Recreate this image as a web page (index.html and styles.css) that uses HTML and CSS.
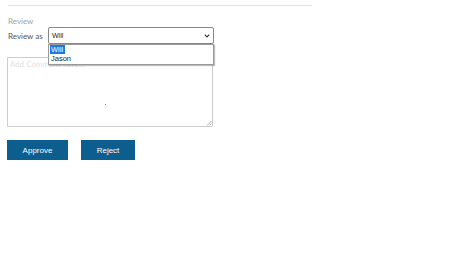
FILE: index.html
```html
<!DOCTYPE html>
<html>
<head>
<meta charset="utf-8">
<link rel="stylesheet" href="styles.css">
</head>
<body>
<div class="page">
  <hr class="rule">
  <div class="section-title">Review</div>
  <div class="review-row">
    <span class="review-label">Review as</span>
    <div class="select-wrap">
      <div class="select">
        <span>Will</span>
        <svg class="chev" width="6" height="4" viewBox="0 0 6 4"><path d="M0.8 0.7 L3 2.9 L5.2 0.7" fill="none" stroke="#333" stroke-width="1.1"/></svg>
      </div>
      <div class="options">
        <div class="opt sel">Will</div>
        <div class="opt">Jason</div>
      </div>
    </div>
  </div>
  <div class="comment">
    <span class="placeholder">Add Comment here...</span>
    <span class="dot"></span>
    <svg class="grip" width="6" height="6" viewBox="0 0 6 6"><path d="M5.5 1 L1 5.5 M5.5 3.5 L3.5 5.5" stroke="#999" stroke-width="0.8"/></svg>
  </div>
  <div class="actions">
    <button class="btn approve">Approve</button>
    <button class="btn reject">Reject</button>
  </div>
</div>
</body>
</html>
```

FILE: styles.css
```css
html, body {
  margin: 0;
  padding: 0;
  background: #fff;
}
.page {
  padding: 0 0 0 7px;
  width: 305px;
  font-family: Lato, "Liberation Sans", sans-serif;
}
.rule {
  margin: 5px 0 0 1px;
  border: 0;
  border-top: 1px solid #e4e4e4;
  height: 0;
}
.section-title {
  margin: 10px 0 0 1px;
  font-size: 8px;
  color: #a0a0a0;
  line-height: 10px;
}
.review-row {
  display: flex;
  align-items: center;
  margin-top: 1px;
  height: 17px;
}
.review-label {
  font-size: 8px;
  color: #555;
  width: 40px;
  margin-left: 1px;
}
.select-wrap {
  position: relative;
  width: 166px;
}
.select {
  height: 15px;
  border: 1px solid #888;
  border-radius: 2px;
  display: flex;
  align-items: center;
  justify-content: space-between;
  padding: 0 3px 0 3px;
  font-family: "Liberation Sans", Arial, sans-serif;
  font-size: 7px;
  color: #222;
  background: #fff;
}
.chev { margin-top: 1px; }
.options {
  position: absolute;
  left: 0;
  top: 17px;
  width: 164px;
  border: 1px solid #999;
  background: #fff;
  box-shadow: 1px 1px 1px rgba(0,0,0,0.25);
  font-family: "Liberation Sans", Arial, sans-serif;
  font-size: 7.5px;
  color: #222;
  padding: 0 0 1px 0;
  z-index: 2;
}
.opt {
  line-height: 9px;
  height: 9px;
  padding-left: 2px;
}
.opt.sel {
  background: #1e78e6;
  color: #fff;
  width: 14px;
  margin-left: 1px;
  padding-left: 1px;
}
.comment {
  position: relative;
  margin-top: 13px;
  width: 204px;
  height: 68px;
  border: 1px solid #ccc;
  border-radius: 1px;
}
.placeholder {
  position: absolute;
  left: 2px;
  top: 2px;
  font-size: 7.5px;
  letter-spacing: 0.3px;
  color: #e0e0e0;
}
.dot {
  position: absolute;
  left: 97px;
  top: 46px;
  width: 1px;
  height: 1px;
  background: #888;
}
.grip {
  position: absolute;
  right: 0;
  bottom: 0;
}
.actions {
  display: flex;
  gap: 13px;
  margin-top: 13px;
}
.btn {
  height: 20px;
  border: 0;
  background: #0b5e8e;
  color: #fff;
  font-family: "Liberation Sans", Arial, sans-serif;
  font-size: 8px;
  padding: 0;
}
.approve { width: 61px; }
.reject { width: 54px; }
```
